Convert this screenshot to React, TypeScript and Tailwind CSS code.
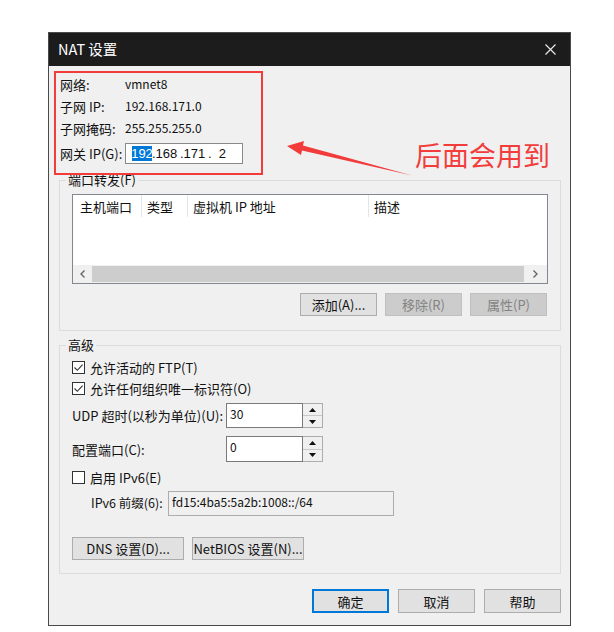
import type { ReactNode } from "react";

const font = "font-['Noto_Sans_CJK_SC','Microsoft_YaHei',sans-serif]";

function Btn({ children, w, disabled, primary }: { children: ReactNode; w: string; disabled?: boolean; primary?: boolean }) {
  return (
    <div
      className={`${w} h-full flex items-center justify-center text-[13px] leading-none ${
        primary
          ? "border-2 border-[#0078d7] bg-[#e1e1e1] text-[#111]"
          : disabled
          ? "border border-[#bfbfbf] bg-[#cccccc] text-[#838383]"
          : "border border-[#adadad] bg-[#e1e1e1] text-[#111]"
      }`}
    >
      {children}
    </div>
  );
}

function Check({ checked }: { checked?: boolean }) {
  return (
    <span className="w-[13px] h-[13px] border border-[#333] bg-white flex items-center justify-center shrink-0">
      {checked && (
        <svg width="11" height="11" viewBox="0 0 11 11">
          <path d="M1.5 5.5 L4.3 8.3 L9.6 2.6" stroke="#333" strokeWidth="1.1" fill="none" />
        </svg>
      )}
    </span>
  );
}

function Spin({ value }: { value: string }) {
  return (
    <div className="flex h-full">
      <div className="w-[77px] h-full border border-[#7a7a7a] bg-white text-[12px] leading-none pl-[3px] pt-[4px] text-[#111]">{value}</div>
      <div className="w-[20px] h-full border border-l-0 border-[#adadad] bg-[#f0f0f0] flex flex-col">
        <div className="flex-1 flex items-center justify-center border-b border-[#c8c8c8]">
          <svg width="7" height="4" viewBox="0 0 7 4"><path d="M0 4 L3.5 0 L7 4 Z" fill="#111" /></svg>
        </div>
        <div className="flex-1 flex items-center justify-center">
          <svg width="7" height="4" viewBox="0 0 7 4"><path d="M0 0 L3.5 4 L7 0 Z" fill="#111" /></svg>
        </div>
      </div>
    </div>
  );
}

export default function App() {
  return (
    <div className={`relative w-[614px] h-[632px] bg-white overflow-hidden ${font} text-[#111]`}>
      <div className="pt-[32px] pl-[48px]">
        <div className="w-[523px] h-[594px] border border-[#4a4a4a] bg-[#f0f0f0] flex flex-col">
          {/* title bar */}
          <div className="h-[33px] bg-[#1c1c1c] flex items-center justify-between pl-[9px] pr-[14px] shrink-0">
            <span className="text-white text-[14.5px] leading-none">NAT 设置</span>
            <svg width="11" height="11" viewBox="0 0 11 11">
              <path d="M0.5 0.5 L10.5 10.5 M10.5 0.5 L0.5 10.5" stroke="#e8e8e8" strokeWidth="1.2" />
            </svg>
          </div>

          {/* info */}
          <div className="pl-[11px] pt-[7px]">
            <div className="h-[22px] flex items-center text-[13px] leading-none">
              <span className="w-[65px]">网络:</span>
              <span className="text-[12px]">vmnet8</span>
            </div>
            <div className="h-[22px] flex items-center text-[13px] leading-none">
              <span className="w-[65px]">子网 IP:</span>
              <span className="text-[12px]">192.168.171.0</span>
            </div>
            <div className="h-[22px] flex items-center text-[13px] leading-none">
              <span className="w-[65px]">子网掩码:</span>
              <span className="text-[12px]">255.255.255.0</span>
            </div>
            <div className="h-[21px] mt-[4px] flex items-center text-[13px] leading-none">
              <span className="w-[65px]">网关 IP(G):</span>
              <div className="w-[118px] h-full border border-[#8a8a8a] bg-white flex items-center pl-[6px] text-[13px] font-['Liberation_Sans',sans-serif]">
                <span className="w-[20px] h-[15px] bg-[#0078d7] text-white flex items-center justify-center">192</span>
                <span className="w-[28px]">.168</span>
                <span className="w-[28px]">.171</span>
                <span>.&nbsp;&nbsp;2</span>
              </div>
            </div>
          </div>

          {/* port forwarding */}
          <div className="relative mt-[16px] ml-[10px] w-[502px] h-[151px] border border-[#dcdcdc] shrink-0">
            <span className="absolute -top-[9px] left-[6px] bg-[#f0f0f0] px-[2px] text-[13px] leading-[16px]">端口转发(F)</span>
            <div className="mt-[13px] ml-[12px] w-[476px] h-[90px] border border-[#828790] bg-white flex flex-col">
              <div className="h-[22px] flex text-[13px] leading-none">
                <div className="w-[69px] flex items-center pl-[7px] border-r border-[#e5e5e5]">主机端口</div>
                <div className="w-[46px] flex items-center pl-[5px] border-r border-[#e5e5e5]">类型</div>
                <div className="w-[181px] flex items-center pl-[5px] border-r border-[#e5e5e5]">虚拟机 IP 地址</div>
                <div className="flex-1 flex items-center pl-[5px]">描述</div>
              </div>
              <div className="flex-1" />
              <div className="h-[18px] flex bg-[#f0f0f0]">
                <div className="w-[19px] flex items-center justify-center">
                  <svg width="5" height="8" viewBox="0 0 5 8"><path d="M4.5 0.5 L1 4 L4.5 7.5" stroke="#606060" strokeWidth="1.3" fill="none" /></svg>
                </div>
                <div className="flex-1 bg-[#cdcdcd] my-[1px]" />
                <div className="w-[23px] flex items-center justify-center">
                  <svg width="5" height="8" viewBox="0 0 5 8"><path d="M0.5 0.5 L4 4 L0.5 7.5" stroke="#606060" strokeWidth="1.3" fill="none" /></svg>
                </div>
              </div>
            </div>
            <div className="mt-[9px] h-[23px] flex justify-end gap-[8px] pr-[13px]">
              <Btn w="w-[77px]">添加(A)...</Btn>
              <Btn w="w-[77px]" disabled>移除(R)</Btn>
              <Btn w="w-[77px]" disabled>属性(P)</Btn>
            </div>
          </div>

          {/* advanced */}
          <div className="relative mt-[14px] ml-[10px] w-[502px] h-[229px] border border-[#dcdcdc] pl-[12px] shrink-0">
            <span className="absolute -top-[9px] left-[6px] bg-[#f0f0f0] px-[2px] text-[13px] leading-[16px]">高级</span>
            <div className="mt-[11px] h-[20px] flex items-center gap-[5px] text-[13px] leading-none">
              <Check checked />
              <span>允许活动的 FTP(T)</span>
            </div>
            <div className="mt-[1px] h-[20px] flex items-center gap-[5px] text-[13px] leading-none">
              <Check checked />
              <span>允许任何组织唯一标识符(O)</span>
            </div>
            <div className="mt-[5px] h-[25px] flex items-center text-[13px] leading-none">
              <span className="w-[154px]">UDP 超时(以秒为单位)(U):</span>
              <Spin value="30" />
            </div>
            <div className="mt-[8px] h-[26px] flex items-center text-[13px] leading-none">
              <span className="w-[154px]">配置端口(C):</span>
              <Spin value="0" />
            </div>
            <div className="mt-[5px] h-[20px] flex items-center gap-[5px] text-[13px] leading-none">
              <Check />
              <span>启用 IPv6(E)</span>
            </div>
            <div className="mt-[4px] h-[25px] flex items-center text-[13px] leading-none pl-[19px]">
              <span className="w-[77px] text-[12.5px]">IPv6 前缀(6):</span>
              <div className="w-[226px] h-full border border-[#adadad] bg-[#f0f0f0] text-[12px] pl-[3px] pt-[4px] leading-none">fd15:4ba5:5a2b:1008::/64</div>
            </div>
            <div className="mt-[21px] h-[23px] flex gap-[8px]">
              <Btn w="w-[112px]">DNS 设置(D)...</Btn>
              <Btn w="w-[112px]">NetBIOS 设置(N)...</Btn>
            </div>
          </div>

          {/* footer */}
          <div className="mt-[15px] h-[24px] flex justify-end gap-[9px] pr-[9px]">
            <Btn w="w-[77px]" primary>确定</Btn>
            <Btn w="w-[77px]">取消</Btn>
            <Btn w="w-[77px]">帮助</Btn>
          </div>
        </div>
      </div>

      {/* annotations */}
      <div className="absolute left-[54px] top-[71px] w-[209px] h-[104px] border-2 border-[#f23b3b]" />
      <svg className="absolute left-[285px] top-[138px]" width="130" height="42" viewBox="0 0 130 42">
        <polygon points="2,8 19,3 18,7.5 127,37.5 17,12.5 16,17" fill="#f23b3b" />
      </svg>
      <div className="absolute left-[415px] top-[141px] text-[27px] leading-none text-[#f23d3d]">后面会用到</div>
    </div>
  );
}
